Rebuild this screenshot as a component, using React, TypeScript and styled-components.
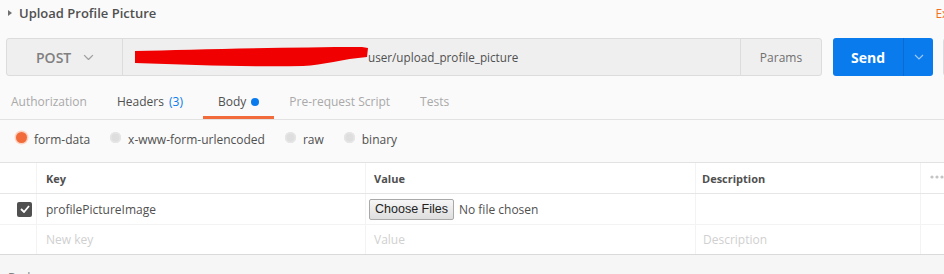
import React from "react";
import styled, { createGlobalStyle } from "styled-components";

const Global = createGlobalStyle`
  html, body { margin: 0; padding: 0; }
  body {
    background: #fafafa;
    font-family: "Open Sans", "DejaVu Sans", sans-serif;
    color: #505050;
    overflow: hidden;
    width: 944px;
    height: 274px;
  }
`;

const Page = styled.div`
  width: 1010px;
  display: flex;
  flex-direction: column;
`;

const TitleBar = styled.div`
  height: 26px;
  display: flex;
  align-items: center;
  justify-content: space-between;
  padding: 0 0 0 8px;
`;

const TitleLeft = styled.div`
  display: flex;
  align-items: center;
  gap: 7px;
`;

const Caret = styled.span`
  width: 0;
  height: 0;
  border-top: 3px solid transparent;
  border-bottom: 3px solid transparent;
  border-left: 4px solid #707070;
`;

const Title = styled.span`
  font-size: 13px;
  font-weight: 600;
  color: #505050;
`;

const Examples = styled.span`
  font-size: 12px;
  color: #f47023;
  padding-right: 4px;
`;

const Toolbar = styled.div`
  display: flex;
  align-items: stretch;
  height: 38px;
  margin: 12px 0 0 6px;
`;

const UrlGroup = styled.div`
  display: flex;
  width: 816px;
  border: 1px solid #dcdcdc;
  border-radius: 3px;
  background: #efefef;
  box-sizing: border-box;
`;

const Method = styled.div`
  width: 116px;
  display: flex;
  align-items: center;
  padding-left: 29px;
  gap: 12px;
  box-sizing: border-box;
  border-right: 1px solid #dcdcdc;
  color: #808080;
  font-size: 14px;
  font-weight: 600;
`;

const UrlField = styled.div`
  flex: 1;
  display: flex;
  align-items: center;
  padding-left: 9px;
  font-size: 11.7px;
  color: #505050;
`;

const Params = styled.div`
  width: 80px;
  display: flex;
  align-items: center;
  justify-content: center;
  border-left: 1px solid #dcdcdc;
  font-size: 12px;
  color: #707070;
`;

const SendButton = styled.div`
  margin-left: 11px;
  width: 100px;
  display: flex;
  border-radius: 3px;
  background: #097bed;
  color: #fff;
`;

const SendLabel = styled.div`
  width: 70px;
  display: flex;
  align-items: center;
  justify-content: center;
  font-size: 14px;
  font-weight: 700;
  border-right: 1px solid #0a6bd0;
`;

const SendArrow = styled.div`
  flex: 1;
  display: flex;
  align-items: center;
  justify-content: center;
`;

const SaveButton = styled.div`
  margin-left: 10px;
  width: 60px;
  border: 1px solid #dcdcdc;
  border-radius: 3px;
  background: #efefef;
`;

const Tabs = styled.div`
  display: flex;
  margin-top: 10px;
  height: 34px;
  border-bottom: 1px solid #e2e2e2;
  box-sizing: border-box;
`;

const Tab = styled.div<{ $active?: boolean; $extra?: number }>`
  padding: 0 ${(p) => 15 + (p.$extra ?? 0)}px 0 15px;
  height: 33px;
  line-height: 31px;
  font-size: 12px;
  color: ${(p) => (p.$active ? "#505050" : "#a9a9a9")};
  border-bottom: 3px solid ${(p) => (p.$active ? "#f26b3a" : "transparent")};
  box-sizing: border-box;
  display: flex;
  gap: 5px;
  align-items: flex-start;
  &:first-child { padding-left: 11px; }
`;

const Dark = styled.span`
  color: #505050;
`;

const Count = styled.span`
  color: #097bed;
  margin-left: 2px;
`;

const Dot = styled.span`
  width: 8px;
  height: 8px;
  border-radius: 50%;
  background: #097bed;
  margin-top: 12px;
`;

const RadioRow = styled.div`
  display: flex;
  align-items: center;
  height: 42px;
  padding: 0 0 4px 16px;
  box-sizing: border-box;
  gap: 20px;
`;

const RadioItem = styled.label`
  display: flex;
  align-items: center;
  gap: 7px;
  font-size: 12px;
  color: #505050;
`;

const RadioDot = styled.span<{ $on?: boolean }>`
  width: 11px;
  height: 11px;
  border-radius: 50%;
  box-sizing: border-box;
  background: ${(p) => (p.$on ? "#f26b3a" : "#dedede")};
  box-shadow: ${(p) =>
    p.$on ? "0 0 0 1.5px #fbd3c2" : "inset 0 0 0 1.5px #e6e6e6"};
  margin-top: -4px;
`;

const Table = styled.div`
  width: 1010px;
  border-top: 1px solid #e2e2e2;
  border-bottom: 1px solid #dadada;
  background: #fff;
`;

const Row = styled.div<{ $head?: boolean; $last?: boolean }>`
  display: grid;
  grid-template-columns: 36px 329px 330px 225px 1fr;
  height: ${(p) => (p.$last ? "29px" : "31px")};
  border-bottom: ${(p) =>
    p.$last ? "none" : p.$head ? "1px solid #e6e6e6" : "1px solid #f3f3f3"};
  box-sizing: border-box;
`;

const Cell = styled.div<{ $head?: boolean; $ph?: boolean; $pad?: number }>`
  display: flex;
  align-items: center;
  padding-left: ${(p) => p.$pad ?? 8}px;
  border-left: 1px solid #f3f3f3;
  font-size: ${(p) => (p.$head ? "11px" : "12px")};
  font-weight: ${(p) => (p.$head ? 700 : 400)};
  color: ${(p) => (p.$ph ? "#d0d0d0" : "#505050")};
  &:first-child { border-left: none; }
`;

const Check = styled.span`
  width: 15px;
  height: 15px;
  border-radius: 2px;
  background: #505050;
  display: flex;
  align-items: center;
  justify-content: center;
`;

const FileButton = styled.button`
  font-family: "Liberation Sans", Arial, sans-serif;
  font-size: 12.5px;
  color: #222;
  height: 21px;
  padding: 0 5px;
  border: 1px solid #a9a9a9;
  border-radius: 2px;
  background: linear-gradient(#f6f6f6, #dedede);
  margin-left: -5px;
  margin-right: 5px;
`;

const FileText = styled.span`
  font-size: 12px;
  color: #505050;
`;

const Footer = styled.div`
  background: #f6f6f6;
  height: 40px;
  padding: 14px 0 0 8px;
  font-size: 12px;
  color: #808080;
`;

const Chevron = ({ color, size = 10 }: { color: string; size?: number }) => (
  <svg width={size} height={size * 0.6} viewBox="0 0 10 6">
    <path d="M1 1 L5 5 L9 1" fill="none" stroke={color} strokeWidth="1.2" />
  </svg>
);

const MoreDots = () => (
  <svg width="16" height="4" viewBox="0 0 16 4" style={{ marginTop: -2 }}>
    <circle cx="2" cy="2" r="1.6" fill="#c4c4c4" />
    <circle cx="7" cy="2" r="1.6" fill="#c4c4c4" />
    <circle cx="12" cy="2" r="1.6" fill="#c4c4c4" />
  </svg>
);

const Scribble = () => (
  <svg width="235" height="24" viewBox="0 0 235 24" style={{ marginLeft: 1, flexShrink: 0 }}>
    <path
      d="M2 6 C60 5 150 2 229 2 L235 3 L234 12 C210 14 190 20 170 21 C120 22 60 20 2 18 Z"
      fill="#f00000"
    />
  </svg>
);

export default function App() {
  return (
    <Page>
      <Global />
      <TitleBar>
        <TitleLeft>
          <Caret />
          <Title>Upload Profile Picture</Title>
        </TitleLeft>
        <Examples>Examples (0)</Examples>
      </TitleBar>

      <Toolbar>
        <UrlGroup>
          <Method>
            POST
            <Chevron color="#a0a0a0" size={11} />
          </Method>
          <UrlField>
            <Scribble />
            user/upload_profile_picture
          </UrlField>
          <Params>Params</Params>
        </UrlGroup>
        <SendButton>
          <SendLabel>Send</SendLabel>
          <SendArrow>
            <Chevron color="#9cc8f6" size={10} />
          </SendArrow>
        </SendButton>
        <SaveButton />
      </Toolbar>

      <Tabs>
        <Tab>Authorization</Tab>
        <Tab $extra={5}>
          <span>
            <Dark>Headers</Dark> <Count>(3)</Count>
          </span>
        </Tab>
        <Tab $active>
          Body <Dot />
        </Tab>
        <Tab>Pre-request Script</Tab>
        <Tab>Tests</Tab>
      </Tabs>

      <RadioRow>
        <RadioItem>
          <RadioDot $on />
          form-data
        </RadioItem>
        <RadioItem>
          <RadioDot />
          x-www-form-urlencoded
        </RadioItem>
        <RadioItem>
          <RadioDot />
          raw
        </RadioItem>
        <RadioItem>
          <RadioDot />
          binary
        </RadioItem>
      </RadioRow>

      <Table>
        <Row $head>
          <Cell />
          <Cell $head $pad={9}>Key</Cell>
          <Cell $head>Value</Cell>
          <Cell $head $pad={6}>Description</Cell>
          <Cell $pad={9}>
            <MoreDots />
          </Cell>
        </Row>
        <Row>
          <Cell $pad={17}>
            <Check>
              <svg width="10" height="8" viewBox="0 0 10 8">
                <path d="M1 4 L4 7 L9 1" fill="none" stroke="#fff" strokeWidth="1.8" />
              </svg>
            </Check>
          </Cell>
          <Cell $pad={9}>profilePictureImage</Cell>
          <Cell>
            <FileButton>Choose Files</FileButton>
            <FileText>No file chosen</FileText>
          </Cell>
          <Cell />
          <Cell />
        </Row>
        <Row $last>
          <Cell />
          <Cell $ph $pad={9}>New key</Cell>
          <Cell $ph>Value</Cell>
          <Cell $ph $pad={7}>Description</Cell>
          <Cell />
        </Row>
      </Table>
      <Footer>Body</Footer>
    </Page>
  );
}
